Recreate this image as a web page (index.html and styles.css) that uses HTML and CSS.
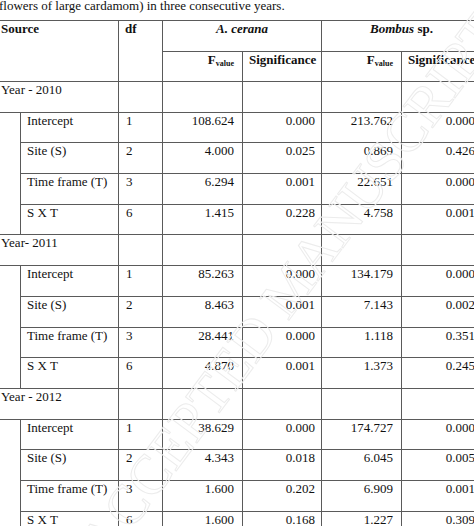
FILE: index.html
```html
<!DOCTYPE html>
<html>
<head>
<meta charset="utf-8">
<link rel="stylesheet" href="styles.css">
</head>
<body>
<div class="page">
  <p class="caption">flowers of large cardamom) in three consecutive years.</p>
  <table class="anova">
    <colgroup>
      <col class="c-indent"><col class="c-label"><col class="c-df">
      <col class="c-f1"><col class="c-s1"><col class="c-f2"><col class="c-s2">
    </colgroup>
    <thead>
      <tr class="h1">
        <th colspan="2" rowspan="2" class="left">Source</th>
        <th rowspan="2" class="left">df</th>
        <th colspan="2" class="center"><i>A. cerana</i></th>
        <th colspan="2" class="center"><i>Bombus</i> sp.</th>
      </tr>
      <tr class="h2">
        <th class="fv">F<sub>value</sub></th>
        <th class="sig">Significance</th>
        <th class="fv">F<sub>value</sub></th>
        <th class="sig">Significance</th>
      </tr>
    </thead>
    <tbody>
      <tr class="year"><td colspan="2" class="label">Year - 2010</td><td></td><td></td><td></td><td></td><td></td></tr>
      <tr><td rowspan="4" class="indent"></td><td class="label">Intercept</td><td class="df">1</td><td class="fv">108.624</td><td class="sig">0.000</td><td class="fv">213.762</td><td class="sig">0.000</td></tr>
      <tr><td class="label">Site (S)</td><td class="df">2</td><td class="fv">4.000</td><td class="sig">0.025</td><td class="fv">0.869</td><td class="sig">0.426</td></tr>
      <tr><td class="label">Time frame (T)</td><td class="df">3</td><td class="fv">6.294</td><td class="sig">0.001</td><td class="fv">22.651</td><td class="sig">0.000</td></tr>
      <tr><td class="label">S X T</td><td class="df">6</td><td class="fv">1.415</td><td class="sig">0.228</td><td class="fv">4.758</td><td class="sig">0.001</td></tr>

      <tr class="year"><td colspan="2" class="label">Year- 2011</td><td></td><td></td><td></td><td></td><td></td></tr>
      <tr><td rowspan="4" class="indent"></td><td class="label">Intercept</td><td class="df">1</td><td class="fv">85.263</td><td class="sig">0.000</td><td class="fv">134.179</td><td class="sig">0.000</td></tr>
      <tr><td class="label">Site (S)</td><td class="df">2</td><td class="fv">8.463</td><td class="sig">0.001</td><td class="fv">7.143</td><td class="sig">0.002</td></tr>
      <tr><td class="label">Time frame (T)</td><td class="df">3</td><td class="fv">28.441</td><td class="sig">0.000</td><td class="fv">1.118</td><td class="sig">0.351</td></tr>
      <tr><td class="label">S X T</td><td class="df">6</td><td class="fv">4.870</td><td class="sig">0.001</td><td class="fv">1.373</td><td class="sig">0.245</td></tr>

      <tr class="year"><td colspan="2" class="label">Year - 2012</td><td></td><td></td><td></td><td></td><td></td></tr>
      <tr><td rowspan="4" class="indent"></td><td class="label">Intercept</td><td class="df">1</td><td class="fv">38.629</td><td class="sig">0.000</td><td class="fv">174.727</td><td class="sig">0.000</td></tr>
      <tr><td class="label">Site (S)</td><td class="df">2</td><td class="fv">4.343</td><td class="sig">0.018</td><td class="fv">6.045</td><td class="sig">0.005</td></tr>
      <tr><td class="label">Time frame (T)</td><td class="df">3</td><td class="fv">1.600</td><td class="sig">0.202</td><td class="fv">6.909</td><td class="sig">0.001</td></tr>
      <tr><td class="label">S X T</td><td class="df">6</td><td class="fv">1.600</td><td class="sig">0.168</td><td class="fv">1.227</td><td class="sig">0.309</td></tr>
    </tbody>
  </table>
  <div class="watermark">ACCEPTED MANUSCRIPT</div>
</div>
</body>
</html>
```

FILE: styles.css
```css
html, body {
  margin: 0;
  padding: 0;
  background: #ffffff;
  overflow: hidden;
}

.page {
  position: relative;
  width: 474px;
  height: 526px;
  overflow: hidden;
  font-family: "Liberation Serif", "Times New Roman", serif;
  font-size: 13px;
  color: #111111;
}

.caption {
  margin: 0 0 0 -1px;
  line-height: 11px;
  white-space: nowrap;
}

.anova {
  margin: 9px 0 0 -6px;
  border-collapse: collapse;
  table-layout: fixed;
  width: 487px;
}

.c-indent { width: 26px; }
.c-label { width: 98px; }
.c-df { width: 44px; }
.c-f1 { width: 80px; }
.c-s1 { width: 79px; }
.c-f2 { width: 80px; }
.c-s2 { width: 80px; }

.anova th,
.anova td {
  border: 1px solid #5a5a5a;
  vertical-align: top;
  padding: 0 6px;
  line-height: 15px;
  white-space: nowrap;
}

.anova th {
  font-weight: bold;
}

.anova tr.h1 { height: 31px; }
.anova tr.h2 { height: 30px; }
.anova tbody tr { height: 30.7px; }

.anova .left { text-align: left; }
.anova .center { text-align: center; }
.anova .fv { text-align: right; padding-right: 8px; }
.anova .sig { text-align: right; padding-right: 6px; }
.anova .label { text-align: left; }
.anova .df { text-align: left; padding-left: 7px; }

.anova sub {
  font-size: 8px;
  line-height: 0;
  vertical-align: -2px;
}

.watermark {
  position: absolute;
  left: 290px;
  top: 287px;
  transform: translate(-50%, -50%) rotate(-53.2deg);
  font-family: "Liberation Serif", "Times New Roman", serif;
  font-size: 56px;
  letter-spacing: 0;
  white-space: nowrap;
  color: transparent;
  -webkit-text-stroke: 1px #ececec;
  pointer-events: none;
}
```
